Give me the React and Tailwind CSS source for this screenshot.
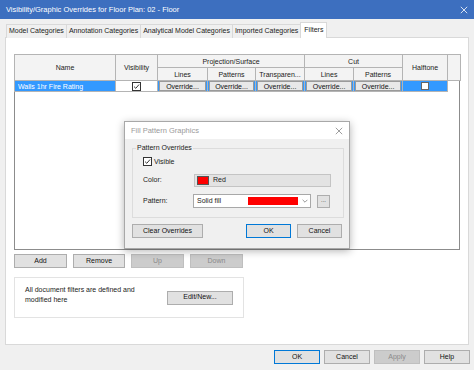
import React from 'react'

const font = { fontFamily: '"Liberation Sans", Arial, sans-serif' }

function Check({ className = '' }) {
  return (
    <span className={'inline-flex items-center justify-center w-[9px] h-[9px] border border-[#333] bg-white ' + className}>
      <svg viewBox="0 0 10 10" className="w-[7px] h-[7px]">
        <path d="M1.5 5.2 L4 7.6 L8.6 2.2" fill="none" stroke="#222" strokeWidth="1.3" />
      </svg>
    </span>
  )
}

function Btn({ children, className = '', disabled, primary }) {
  return (
    <div
      className={
        'flex items-center justify-center h-[14px] border text-[7px] ' +
        (disabled
          ? 'bg-[#cccccc] border-[#bfbfbf] text-[#8a8a8a] '
          : primary
            ? 'bg-[#e1e1e1] border-[#0078d7] text-[#111] '
            : 'bg-[#e1e1e1] border-[#adadad] text-[#111] ') +
        className
      }
    >
      {children}
    </div>
  )
}

function Override() {
  return (
    <td className="border border-[#b4b4b4] bg-[#3399ff] p-0 h-[11px]">
      <div className="mx-[1px] h-[10px] bg-[#e8e8e8] border border-[#9a9a9a] flex items-center justify-center text-[7px] text-[#111] leading-none">
        Override...
      </div>
    </td>
  )
}

function FilterTable() {
  const th = 'border border-[#b4b4b4] bg-[#f3f3f3] font-normal text-[7px] text-[#222] p-0 leading-none'
  return (
    <div className="w-[446px] h-[196px] border border-[#8c8c8c] bg-white">
      <table className="table-fixed border-collapse w-[446px] -mt-[1px] -ml-[1px]">
        <colgroup>
          <col className="w-[101px]" />
          <col className="w-[42px]" />
          <col className="w-[50px]" />
          <col className="w-[48px]" />
          <col className="w-[49px]" />
          <col className="w-[49px]" />
          <col className="w-[49px]" />
          <col className="w-[45px]" />
          <col className="w-[13px]" />
        </colgroup>
        <thead>
          <tr className="h-[13px]">
            <th rowSpan={2} className={th}>Name</th>
            <th rowSpan={2} className={th}>Visibility</th>
            <th colSpan={3} className={th}>Projection/Surface</th>
            <th colSpan={2} className={th}>Cut</th>
            <th rowSpan={2} className={th}>Halftone</th>
            <th rowSpan={2} className={th}></th>
          </tr>
          <tr className="h-[13px]">
            <th className={th}>Lines</th>
            <th className={th}>Patterns</th>
            <th className={th + ' whitespace-nowrap overflow-hidden'}>Transparen...</th>
            <th className={th}>Lines</th>
            <th className={th}>Patterns</th>
          </tr>
        </thead>
        <tbody>
          <tr className="h-[11px]">
            <td className="border border-[#b4b4b4] bg-[#3399ff] text-white text-[7px] pl-[3px] p-0 leading-none whitespace-nowrap">
              Walls 1hr Fire Rating
            </td>
            <td className="border border-[#b4b4b4] bg-white p-0">
              <div className="flex justify-center"><Check /></div>
            </td>
            <Override />
            <Override />
            <Override />
            <Override />
            <Override />
            <td className="border border-[#b4b4b4] bg-[#3399ff] p-0">
              <div className="flex justify-center">
                <span className="w-[8px] h-[8px] bg-white border border-[#666]" />
              </div>
            </td>
            <td className="p-0"></td>
          </tr>
        </tbody>
      </table>
    </div>
  )
}

function FillDialog() {
  return (
    <div className="absolute left-[124px] top-[121px] w-[226px] h-[128px] bg-[#f0f0f0] border border-[#a8a8a8] shadow-[0_2px_8px_rgba(0,0,0,0.3)] flex flex-col">
      <div className="h-[17px] bg-white flex items-center justify-between pl-[6px] pr-[6px]">
        <span className="text-[7.5px] text-[#9a9a9a]">Fill Pattern Graphics</span>
        <svg viewBox="0 0 10 10" className="w-[8px] h-[8px]">
          <path d="M1 1 L9 9 M9 1 L1 9" stroke="#777" strokeWidth="0.9" />
        </svg>
      </div>
      <div className="px-[7px] pt-[4px]">
        <fieldset className="border border-[#dcdcdc] w-[212px] h-[75px] px-[10px]">
          <legend className="text-[7px] text-[#222] px-[1px] -ml-[7px]">Pattern Overrides</legend>
          <div className="flex items-center gap-[2px] text-[7px] text-[#222] mt-[3px]">
            <Check />
            <span>Visible</span>
          </div>
          <div className="flex items-center mt-[7px] text-[7px] text-[#222]">
            <span className="w-[51px]">Color:</span>
            <div className="w-[137px] h-[13px] bg-[#e3e3e3] border border-[#c4c4c4] flex items-center pl-[2px] gap-[4px]">
              <span className="w-[12px] h-[9px] bg-[#ff0000] border border-[#555]" />
              <span>Red</span>
            </div>
          </div>
          <div className="flex items-center mt-[7px] text-[7px] text-[#222]">
            <span className="w-[50px]">Pattern:</span>
            <div className="w-[118px] h-[14px] bg-white border border-[#a8a8a8] flex items-center pl-[3px]">
              <span className="w-[51px]">Solid fill</span>
              <span className="w-[50px] h-[8px] bg-[#ff0000]" />
              <svg viewBox="0 0 10 10" className="w-[6px] h-[6px] ml-[4px]">
                <path d="M1 3 L5 7 L9 3" fill="none" stroke="#555" strokeWidth="1" />
              </svg>
            </div>
            <div className="ml-[6px] w-[13px] h-[13px] bg-[#e1e1e1] border border-[#adadad] flex items-center justify-center text-[6px] leading-none pb-[2px]">...</div>
          </div>
        </fieldset>
      </div>
      <div className="flex items-center px-[7px] mt-[6px]">
        <Btn className="w-[71px]">Clear Overrides</Btn>
        <Btn primary className="w-[45px] ml-[43px]">OK</Btn>
        <Btn className="w-[45px] ml-[6px]">Cancel</Btn>
      </div>
    </div>
  )
}

export default function App() {
  return (
    <div style={font} className="relative w-[474px] h-[370px] bg-[#f0f0f0] flex flex-col overflow-hidden">
      <div className="h-[19px] bg-[#3d6fbf] flex items-center justify-between pl-[6px] pr-[6px] shrink-0">
        <span className="text-[7.5px] text-white">Visibility/Graphic Overrides for Floor Plan: 02 - Floor</span>
        <svg viewBox="0 0 10 10" className="w-[8px] h-[8px]">
          <path d="M1 1 L9 9 M9 1 L1 9" stroke="#fff" strokeWidth="1" />
        </svg>
      </div>
      <div className="flex items-end pl-[6px] h-[19px] shrink-0 -mb-[1px] relative z-10">
        {['Model Categories', 'Annotation Categories', 'Analytical Model Categories', 'Imported Categories'].map((t) => (
          <div key={t} className="h-[14px] px-[2px] border border-b-0 border-[#d9d9d9] bg-[#f0f0f0] -mr-[1px] flex items-center text-[7px] text-[#222] whitespace-nowrap">
            {t}
          </div>
        ))}
        <div className="h-[16px] px-[3px] border border-b-0 border-[#d9d9d9] bg-white flex items-start pt-[2px] text-[7px] text-[#222]">
          Filters
        </div>
      </div>
      <div className="mx-[5px] h-[308px] bg-white border border-[#d9d9d9] shrink-0 pl-[8px] pt-[16px]">
        <FilterTable />
        <div className="flex gap-[6px] mt-[4px]">
          <Btn className="w-[53px]">Add</Btn>
          <Btn className="w-[52px]">Remove</Btn>
          <Btn disabled className="w-[53px]">Up</Btn>
          <Btn disabled className="w-[53px]">Down</Btn>
        </div>
        <div className="mt-[9px] w-[230px] h-[41px] border border-[#e3e3e3] flex items-center pl-[10px] pr-[10px] justify-between">
          <div className="text-[7px] text-[#222] leading-[10px] w-[120px] mb-[6px]">
            All document filters are defined and modified here
          </div>
          <Btn className="w-[66px]">Edit/New...</Btn>
        </div>
      </div>
      <div className="flex justify-end gap-[4px] pr-[4px] mt-[5px]">
        <Btn primary className="w-[46px]">OK</Btn>
        <Btn className="w-[46px]">Cancel</Btn>
        <Btn disabled className="w-[46px]">Apply</Btn>
        <Btn className="w-[46px]">Help</Btn>
      </div>
      <FillDialog />
    </div>
  )
}
